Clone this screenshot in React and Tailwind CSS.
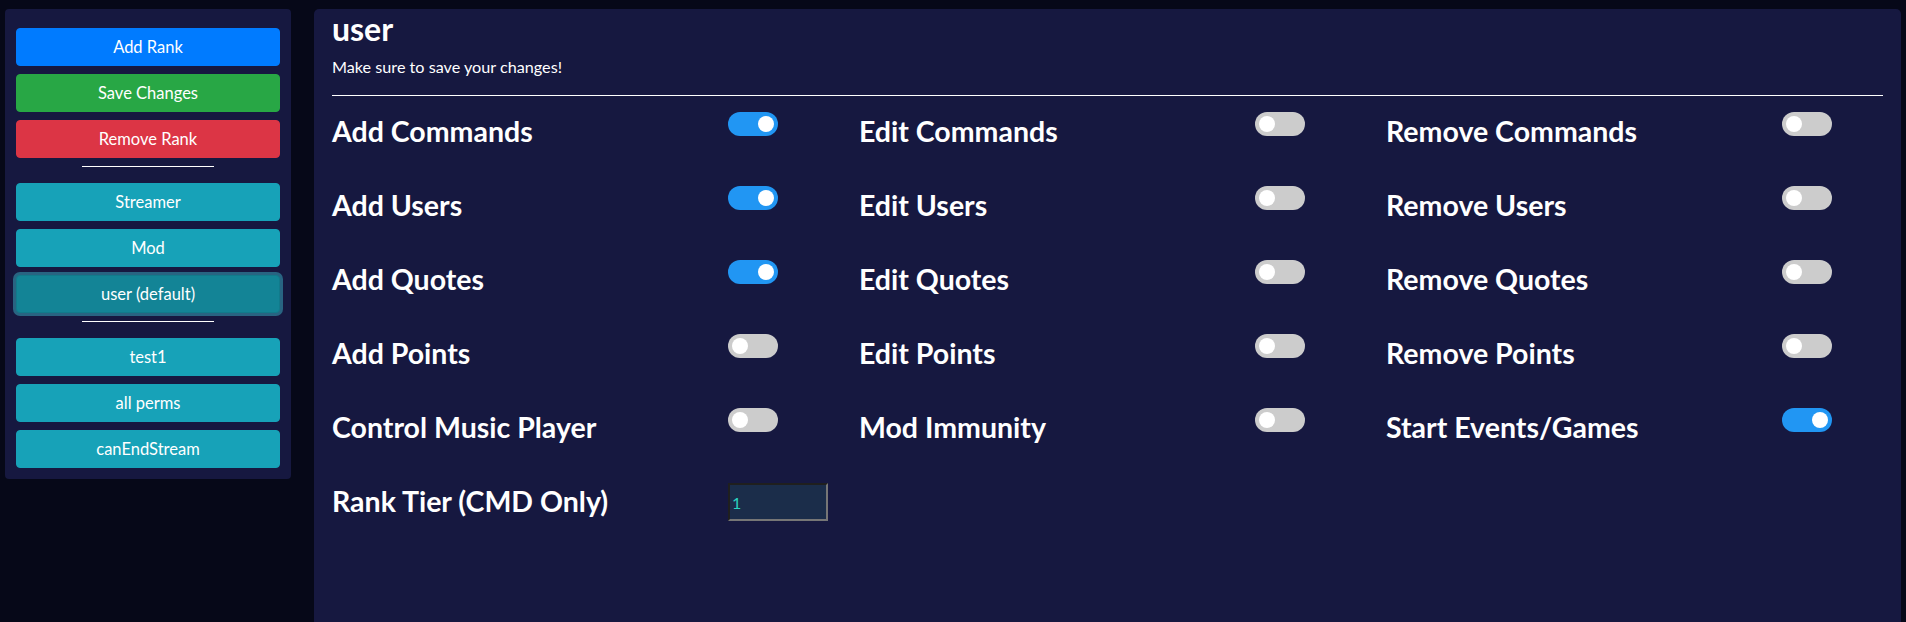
import React from "react";

const font = { fontFamily: "Lato, 'Open Sans', sans-serif" };

function Toggle({ on }) {
  return (
    <div
      className={
        "relative w-[50px] h-[24px] rounded-full shrink-0 " +
        (on ? "bg-[#2196f3]" : "bg-[#cccccc]")
      }
    >
      <div
        className={
          "absolute top-[4px] w-[16px] h-[16px] rounded-full bg-white " +
          (on ? "left-[30px]" : "left-[4px]")
        }
      />
    </div>
  );
}

const perms = [
  ["Add Commands", true],
  ["Edit Commands", false],
  ["Remove Commands", false],
  ["Add Users", true],
  ["Edit Users", false],
  ["Remove Users", false],
  ["Add Quotes", true],
  ["Edit Quotes", false],
  ["Remove Quotes", false],
  ["Add Points", false],
  ["Edit Points", false],
  ["Remove Points", false],
  ["Control Music Player", false],
  ["Mod Immunity", false],
  ["Start Events/Games", true],
];

function SideButton({ children, color, selected }) {
  if (selected) {
    return (
      <button className="h-[38px] w-full rounded-[4px] bg-[#138496] border border-[#117a8b] text-white text-[16.5px] shadow-[0_0_0_3px_rgba(58,176,195,0.5)]">
        {children}
      </button>
    );
  }
  return (
    <button
      className={
        "h-[38px] w-full rounded-[4px] text-white text-[16.5px] border " + color
      }
    >
      {children}
    </button>
  );
}

export default function App() {
  return (
    <div
      className="flex h-screen overflow-hidden bg-[#060818] pt-[9px] pl-[5px] pr-[5px] gap-[23px]"
      style={font}
    >
      <div className="w-[286px] shrink-0 self-start rounded-[4px] bg-[#161840] pt-[19px] pb-[11px] px-[11px] flex flex-col gap-[8px]">
        <SideButton color="bg-[#007bff] border-[#007bff]">Add Rank</SideButton>
        <SideButton color="bg-[#28a745] border-[#28a745]">Save Changes</SideButton>
        <SideButton color="bg-[#dc3545] border-[#dc3545]">Remove Rank</SideButton>
        <div className="w-[132px] mx-auto h-px bg-white mb-[8px]" />
        <SideButton color="bg-[#17a2b8] border-[#17a2b8]">Streamer</SideButton>
        <SideButton color="bg-[#17a2b8] border-[#17a2b8]">Mod</SideButton>
        <SideButton selected>user (default)</SideButton>
        <div className="w-[132px] mx-auto h-px bg-white mb-[8px]" />
        <SideButton color="bg-[#17a2b8] border-[#17a2b8]">test1</SideButton>
        <SideButton color="bg-[#17a2b8] border-[#17a2b8]">all perms</SideButton>
        <SideButton color="bg-[#17a2b8] border-[#17a2b8]">canEndStream</SideButton>
      </div>

      <div className="flex-1 rounded-t-[5px] bg-[#161840] px-[18px] text-white">
        <div className="mt-[1px] text-[32px] font-bold leading-[38px]">user</div>
        <div className="mt-[7px] text-[16.2px] leading-[24px]">
          Make sure to save your changes!
        </div>
        <div className="mt-[16px] h-px bg-white" />
        <div className="mt-[16px] grid grid-cols-3 gap-x-[30px]">
          {perms.map(([label, on]) => (
            <div key={label} className="h-[74px] flex items-start">
              <div className="w-[396px] shrink-0 pt-[2px] text-[28.5px] font-bold leading-[35px] whitespace-nowrap">
                {label}
              </div>
              <Toggle on={on} />
            </div>
          ))}
          <div className="h-[74px] flex items-start">
            <div className="w-[396px] shrink-0 pt-[2px] text-[28.5px] font-bold leading-[35px] whitespace-nowrap">
              Rank Tier (CMD Only)
            </div>
            <input
              defaultValue="1"
              className="mt-[1px] w-[100px] h-[38px] bg-[#1b2d4a] border-2 border-t-[#1f1f1f] border-l-[#1f1f1f] border-b-[#767676] border-r-[#767676] px-[2px] text-[16px] text-[#2ad4c0] outline-none"
            />
          </div>
        </div>
      </div>
    </div>
  );
}
